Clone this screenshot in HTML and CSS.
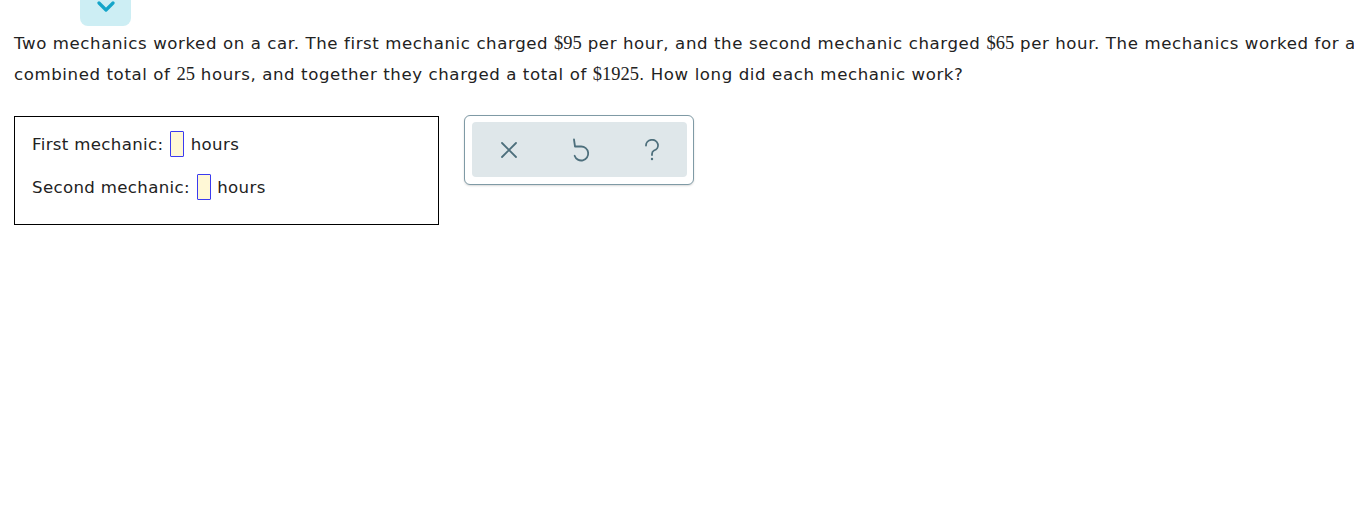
FILE: index.html
```html
<!DOCTYPE html>
<html>
<head>
<meta charset="utf-8">
<link rel="stylesheet" href="styles.css">
</head>
<body>
<div class="page">
  <div class="tab-row">
    <div class="tab">
      <svg width="20" height="12" viewBox="0 0 20 12"><path d="M3 2 L10 9 L17 2" fill="none" stroke="#14a5c9" stroke-width="3.2" stroke-linecap="round" stroke-linejoin="round"/></svg>
    </div>
  </div>
  <p class="question">Two mechanics worked on a car. The first mechanic charged <span class="num">$95</span> per hour, and the second mechanic charged <span class="num">$65</span> per hour. The mechanics worked for a<br>combined total of <span class="num">25</span> hours, and together they charged a total of <span class="num">$1925</span>. How long did each mechanic work?</p>
  <div class="work">
    <div class="answer">
      <div class="row">First mechanic: <span class="inp"></span> hours</div>
      <div class="row">Second mechanic: <span class="inp"></span> hours</div>
    </div>
    <div class="tools">
      <div class="tools-inner">
        <svg class="ico" width="18" height="18" viewBox="0 0 18 18"><path d="M2 2 L16 16 M16 2 L2 16" stroke="#4d6f7c" stroke-width="1.8" fill="none" stroke-linecap="round"/></svg>
        <svg class="ico" width="20" height="24" viewBox="0 0 20 24"><path d="M3 1.5 L4 8.5 L10 8.5 A7 7 0 1 1 3.6 17.8" fill="none" stroke="#4d6f7c" stroke-width="1.8" stroke-linecap="round" stroke-linejoin="round"/></svg>
        <svg class="ico" width="16" height="22" viewBox="0 0 16 22"><path d="M2 6.5 A6 5.5 0 1 1 10 11.5 Q8 12.5 8 15 L8 16" fill="none" stroke="#4d6f7c" stroke-width="1.8" stroke-linecap="round"/><circle cx="8" cy="20" r="1.2" fill="#4d6f7c"/></svg>
      </div>
    </div>
  </div>
</div>
</body>
</html>
```
FILE: styles.css
```css
html, body { margin: 0; padding: 0; background: #fff; }
body { font-family: "DejaVu Sans", Verdana, sans-serif; font-size: 16px; color: #222; overflow: hidden; }
.page { width: 1354px; height: 514px; overflow: hidden; }
.tab-row { display: flex; padding-left: 80px; height: 26px; }
.tab {
  width: 51px; height: 26px; background: #cdeef4;
  border-radius: 0 0 8px 8px;
  display: flex; justify-content: center; align-items: flex-start; padding-top: 1px;
  box-sizing: border-box;
}
.question {
  margin: 0; padding: 2px 0 0 14px; line-height: 30px; white-space: nowrap;
  font-size: 16.6px; letter-spacing: 0.6px; color: #222;
}
.num { font-family: "Liberation Serif", "Times New Roman", serif; font-size: 18.5px; letter-spacing: 0; }
.work { display: flex; align-items: flex-start; gap: 25px; padding: 26px 0 0 14px; }
.answer {
  width: 425px; height: 109px; box-sizing: border-box; border: 1px solid #000;
  padding: 13px 0 0 17px; font-size: 16.6px; letter-spacing: 0.35px;
}
.row { display: flex; align-items: center; height: 28px; margin-bottom: 15px; white-space: pre; }
.inp {
  display: inline-block; width: 14px; height: 26px; box-sizing: border-box;
  background: #fff8d6; border: 1px solid #3b3bf0; border-radius: 1px; margin: 0 1px;
}
.tools {
  width: 230px; height: 70px; box-sizing: border-box; border: 1px solid #7f9aa5;
  border-radius: 6px; background: #fff; padding: 6px 6px 7px 7px;
  box-shadow: 0 1px 2px rgba(0,0,0,0.15);
  margin-top: -1px;
}
.tools-inner {
  height: 55px; background: #dfe7ea; border-radius: 4px;
  display: flex; align-items: center; justify-content: space-between; padding: 0 27px 0 28px;
}
.ico { display: block; }
```
